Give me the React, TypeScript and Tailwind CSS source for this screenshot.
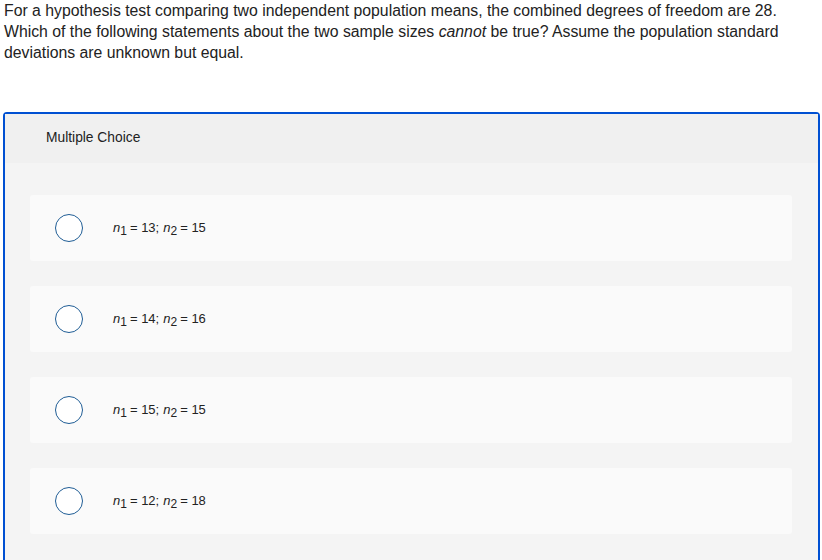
import React from "react";

const options: [string, string][] = [
  ["13", "15"],
  ["14", "16"],
  ["15", "15"],
  ["12", "18"],
];

export default function App() {
  return (
    <div className="w-[822px] h-[560px] overflow-hidden bg-white text-[#222]" style={{ fontFamily: "'Liberation Sans', Arial, sans-serif" }}>
      <div className="pl-[4px] text-[15.8px] leading-[21px] whitespace-nowrap">
        For a hypothesis test comparing two independent population means, the combined degrees of freedom are 28.
        <br />
        Which of the following statements about the two sample sizes <i>cannot</i> be true? Assume the population standard
        <br />
        deviations are unknown but equal.
      </div>
      <div className="ml-[3px] mr-[2px] mt-[49px] border-2 border-[#0050d2] rounded-t-[4px] bg-[#f4f4f4] h-[600px]">
        <div className="h-[49px] bg-[#f0f0f0] flex items-center pl-[41px] text-[13.8px] text-[#222]">Multiple Choice</div>
        <div className="pt-[32px] pl-[25px] pr-[26px] flex flex-col gap-[25px]">
          {options.map(([a, b], i) => (
            <div key={i} className="h-[66px] bg-[#fafafa] rounded-[3px] flex items-center">
              <div className="ml-[25px] w-[28px] h-[28px] rounded-full border-[1.5px] border-[#1f5d95] bg-white" />
              <div className="ml-[30px] text-[13px] text-[#222] flex items-baseline">
                <span className="italic">n</span>
                <sub className="text-[12px] relative top-[3px]">1</sub>
                <span className="ml-[3px]">= {a}; </span>
                <span className="italic ml-[4px]">n</span>
                <sub className="text-[12px] relative top-[3px]">2</sub>
                <span className="ml-[3px]">= {b}</span>
              </div>
            </div>
          ))}
        </div>
      </div>
    </div>
  );
}
